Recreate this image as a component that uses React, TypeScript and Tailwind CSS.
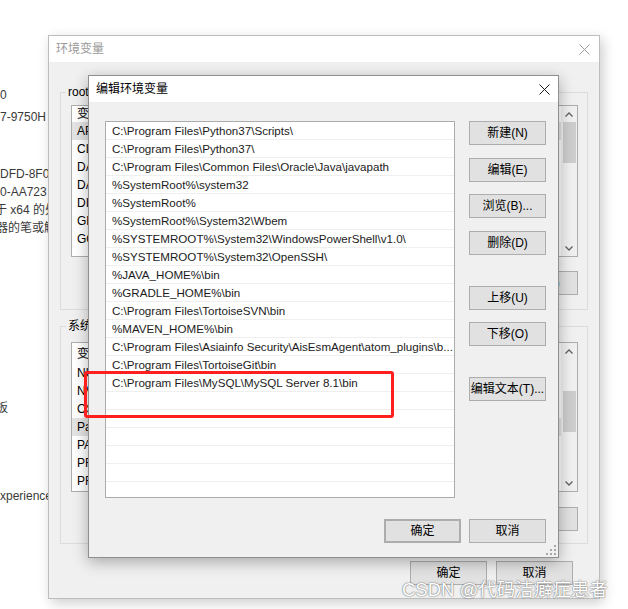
import React from "react";

const paths = [
  "C:\\Program Files\\Python37\\Scripts\\",
  "C:\\Program Files\\Python37\\",
  "C:\\Program Files\\Common Files\\Oracle\\Java\\javapath",
  "%SystemRoot%\\system32",
  "%SystemRoot%",
  "%SystemRoot%\\System32\\Wbem",
  "%SYSTEMROOT%\\System32\\WindowsPowerShell\\v1.0\\",
  "%SYSTEMROOT%\\System32\\OpenSSH\\",
  "%JAVA_HOME%\\bin",
  "%GRADLE_HOME%\\bin",
  "C:\\Program Files\\TortoiseSVN\\bin",
  "%MAVEN_HOME%\\bin",
  "C:\\Program Files\\Asiainfo Security\\AisEsmAgent\\atom_plugins\\b...",
  "C:\\Program Files\\TortoiseGit\\bin",
  "C:\\Program Files\\MySQL\\MySQL Server 8.1\\bin",
  "",
  "",
  "",
  "",
  "",
  "",
];

const userVars = ["APPDATA_HOME", "CLASSPATH", "DATA_DIR", "DAEMON_HOME", "DIR_HOME", "GRADLE_HOME", "GOPATH"];
const sysVars = ["NUMBER_OF_PROCESSORS", "NVM_HOME", "OS", "Path", "PATHEXT", "PROCESSOR_ARCHITECTURE", "PROCESSOR_IDENTIFIER"];

const CloseIcon = ({ color }: { color: string }) => (
  <svg width="11" height="11" viewBox="0 0 11 11" fill="none" stroke={color} strokeWidth="1">
    <line x1="0.5" y1="0.5" x2="10.5" y2="10.5" />
    <line x1="10.5" y1="0.5" x2="0.5" y2="10.5" />
  </svg>
);

const Chevron = ({ up }: { up?: boolean }) => (
  <div className="h-[16px] w-full flex items-center justify-center">
    <svg width="8" height="5" viewBox="0 0 8 5" fill="none" stroke="#606060" strokeWidth="1.3">
      {up ? <polyline points="0.5,4.5 4,1 7.5,4.5" /> : <polyline points="0.5,0.5 4,4 7.5,0.5" />}
    </svg>
  </div>
);

const Btn = ({ children, className = "" }: { children?: React.ReactNode; className?: string }) => (
  <div
    className={`h-[24px] w-[77px] shrink-0 flex items-center justify-center bg-[#e1e1e1] border border-[#adadad] text-[12px] text-black whitespace-nowrap ${className}`}
  >
    {children}
  </div>
);

const VarList = ({
  rows,
  selected,
  heightClass,
  headerClass,
  thumbClass,
}: {
  rows: string[];
  selected: number;
  heightClass: string;
  headerClass: string;
  thumbClass: string;
}) => (
  <div className={`${heightClass} border border-[#adadad] bg-white flex overflow-hidden`}>
    <div className="flex-1 flex flex-col overflow-hidden whitespace-nowrap">
      <div className={`${headerClass} shrink-0 flex items-center pl-[5px]`}>变量</div>
      {rows.map((r, i) => (
        <div key={i} className={`h-[18px] shrink-0 flex items-center pl-[5px] ${i === selected ? "bg-[#e3e3e3]" : ""}`}>
          {r}
        </div>
      ))}
    </div>
    <div className="w-[16px] bg-[#f0f0f0] flex flex-col items-center">
      <Chevron up />
      <div className={`w-[13px] h-[41px] bg-[#cdcdcd] ${thumbClass}`} />
      <div className="flex-1" />
      <Chevron />
    </div>
  </div>
);

const EnvDialog = () => (
  <div className="absolute left-[48px] top-[35px] w-[552px] h-[564px] border border-[#bdbdbd] bg-[#f0f0f0] shadow-[3px_4px_12px_rgba(0,0,0,0.2)] flex flex-col">
    <div className="h-[26px] shrink-0 bg-white flex items-center justify-between pl-[7px] pr-[9px]">
      <span className="text-[#9a9a9a]">环境变量</span>
      <CloseIcon color="#9a9a9a" />
    </div>
    <div className="px-[11px] flex flex-col">
      <fieldset className="mt-[22px] h-[226px] border border-[#dcdcdc] pl-[10px] pr-[9px]">
        <legend className="ml-[-5px] px-[2px] leading-[16px] whitespace-nowrap">root 的用户变量(U)</legend>
        <div className="mt-[5px]">
          <VarList rows={userVars} selected={0} heightClass="h-[152px]" headerClass="h-[16px]" thumbClass="mt-0" />
        </div>
        <div className="mt-[14px] flex justify-end gap-[8px]">
          <Btn>新建(N)...</Btn>
          <Btn>编辑(E)...</Btn>
          <Btn>删除(D)</Btn>
        </div>
      </fieldset>
      <fieldset className="mt-[8px] h-[226px] border border-[#dcdcdc] pl-[10px] pr-[9px]">
        <legend className="ml-[-5px] px-[2px] leading-[16px] whitespace-nowrap">系统变量(S)</legend>
        <div className="mt-[8px]">
          <VarList rows={sysVars} selected={3} heightClass="h-[150px]" headerClass="h-[21px]" thumbClass="mt-[32px]" />
        </div>
        <div className="mt-[15px] flex justify-end gap-[8px]">
          <Btn>新建(W)...</Btn>
          <Btn>编辑(I)...</Btn>
          <Btn>删除(L)</Btn>
        </div>
      </fieldset>
      <div className="mt-[17px] pr-[15px] flex justify-end gap-[9px]">
        <Btn className="w-[76px]">确定</Btn>
        <Btn className="w-[77px]">取消</Btn>
      </div>
    </div>
  </div>
);

const EditDialog = () => (
  <div className="absolute left-[88px] top-[75px] w-[471px] h-[483px] border border-[#8f8f8f] bg-[#f0f0f0] shadow-[0_4px_14px_rgba(0,0,0,0.3)] flex flex-col">
    <div className="h-[26px] shrink-0 bg-white flex items-center justify-between pl-[7px] pr-[8px]">
      <span className="text-black">编辑环境变量</span>
      <CloseIcon color="#1a1a1a" />
    </div>
    <div className="pl-[16px] pt-[19px] flex flex-col">
      <div className="flex gap-[14px]">
        <div className="w-[350px] h-[377px] border border-[#acacac] bg-white overflow-hidden flex flex-col">
          {paths.map((p, i) => (
            <div
              key={i}
              className="h-[18px] shrink-0 border-b border-[#efefef] pl-[6px] pr-[4px] leading-[17px] text-[11.6px] text-[#1b1b1b] whitespace-nowrap overflow-hidden"
            >
              {p}
            </div>
          ))}
        </div>
        <div className="w-[77px] flex flex-col">
          <Btn>新建(N)</Btn>
          <Btn className="mt-[13px]">编辑(E)</Btn>
          <Btn className="mt-[12px]">浏览(B)...</Btn>
          <Btn className="mt-[13px]">删除(D)</Btn>
          <Btn className="mt-[31px]">上移(U)</Btn>
          <Btn className="mt-[12px]">下移(O)</Btn>
          <Btn className="mt-[31px]">编辑文本(T)...</Btn>
        </div>
      </div>
      <div className="mt-[21px] w-[441px] flex justify-end gap-[8px]">
        <Btn className="border-2 border-[#0078d7]">确定</Btn>
        <Btn>取消</Btn>
      </div>
    </div>
    <svg className="absolute right-[2px] bottom-[2px]" width="10" height="10" viewBox="0 0 10 10" fill="#a8a8a8">
      <rect x="8" y="0" width="2" height="2" />
      <rect x="4" y="4" width="2" height="2" />
      <rect x="8" y="4" width="2" height="2" />
      <rect x="0" y="8" width="2" height="2" />
      <rect x="4" y="8" width="2" height="2" />
      <rect x="8" y="8" width="2" height="2" />
    </svg>
  </div>
);

export default function App() {
  return (
    <div className="relative w-[628px] h-[609px] overflow-hidden bg-white font-['Liberation_Sans','Noto_Sans_CJK_SC',sans-serif] text-[12px] text-black">
      {/* page behind the dialogs, visible left of the window */}
      <div className="w-[48px] overflow-hidden pt-[86px] text-[12px] leading-[18px] text-[#3a3a3a] whitespace-nowrap">
        <p className="h-[18px]">0</p>
        <p className="h-[18px] mt-[4px]">7-9750H C</p>
        <p className="h-[18px] mt-[39px]">DFD-8F07</p>
        <p className="h-[18px]">0-AA723</p>
        <p className="h-[18px] ml-[-5px]">于 x64 的处</p>
        <p className="h-[18px] ml-[-4px]">器的笔或触</p>
        <p className="h-[18px] mt-[162px] ml-[-4px]">板</p>
        <p className="h-[18px] mt-[70px] ml-[-8px]">Experience</p>
      </div>

      <EnvDialog />
      <EditDialog />

      {/* annotation */}
      <div className="absolute left-[84px] top-[371px] w-[310px] h-[47px] border-[3px] border-[#ff1f1f] rounded-[3px]" />

      <div className="absolute left-[402px] top-[579px] whitespace-nowrap text-[18.5px] leading-[22px] text-white [text-shadow:0_0_1px_#666,0_0_2px_#888]">
        CSDN @代码洁癖症患者
      </div>
    </div>
  );
}
